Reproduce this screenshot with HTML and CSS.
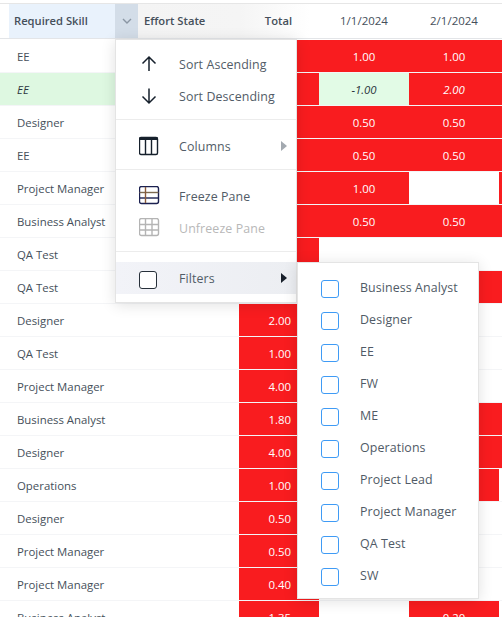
FILE: index.html
```html
<!DOCTYPE html>
<html lang="en">
<head>
<meta charset="utf-8">
<title>Resource grid</title>
<link rel="stylesheet" href="styles.css">
</head>
<body>
<div class="page">
  <div class="grid">
    <div class="row head">
      <div class="h-pad"></div>
      <div class="h-skill">Required Skill</div>
      <div class="h-btn"><svg width="10" height="6" viewBox="0 0 10 6"><path d="M1 1l4 4 4-4" fill="none" stroke="#8a96a3" stroke-width="1.4"/></svg></div>
      <div class="h-effort">Effort State</div>
      <div class="h-total">Total</div>
      <div class="h-date">1/1/2024</div>
      <div class="h-date">2/1/2024</div>
      <div class="h-date"></div>
    </div>
    <div class="row"><div class="skill">EE</div><div class="effort"></div><div class="total red"></div><div class="date red">1.00</div><div class="date red">1.00</div><div class="date red"></div></div>
    <div class="row green"><div class="skill">EE</div><div class="effort"></div><div class="total red"></div><div class="date pale">-1.00</div><div class="date red">2.00</div><div class="date red"></div></div>
    <div class="row"><div class="skill">Designer</div><div class="effort"></div><div class="total red"></div><div class="date red">0.50</div><div class="date red">0.50</div><div class="date red"></div></div>
    <div class="row"><div class="skill">EE</div><div class="effort"></div><div class="total red"></div><div class="date red">0.50</div><div class="date red">0.50</div><div class="date red"></div></div>
    <div class="row"><div class="skill">Project Manager</div><div class="effort"></div><div class="total red"></div><div class="date red">1.00</div><div class="date"></div><div class="date red"></div></div>
    <div class="row"><div class="skill">Business Analyst</div><div class="effort"></div><div class="total red"></div><div class="date red">0.50</div><div class="date red">0.50</div><div class="date red"></div></div>
    <div class="row"><div class="skill">QA Test</div><div class="effort"></div><div class="total red"></div><div class="date"></div><div class="date"></div><div class="date"></div></div>
    <div class="row"><div class="skill">QA Test</div><div class="effort"></div><div class="total red"></div><div class="date"></div><div class="date red"></div><div class="date red"></div></div>
    <div class="row"><div class="skill">Designer</div><div class="effort"></div><div class="total red">2.00</div><div class="date"></div><div class="date"></div><div class="date"></div></div>
    <div class="row"><div class="skill">QA Test</div><div class="effort"></div><div class="total red">1.00</div><div class="date"></div><div class="date"></div><div class="date"></div></div>
    <div class="row"><div class="skill">Project Manager</div><div class="effort"></div><div class="total red">4.00</div><div class="date"></div><div class="date"></div><div class="date"></div></div>
    <div class="row"><div class="skill">Business Analyst</div><div class="effort"></div><div class="total red">1.80</div><div class="date"></div><div class="date red"></div><div class="date red"></div></div>
    <div class="row"><div class="skill">Designer</div><div class="effort"></div><div class="total red">4.00</div><div class="date"></div><div class="date red"></div><div class="date red"></div></div>
    <div class="row"><div class="skill">Operations</div><div class="effort"></div><div class="total red">1.00</div><div class="date"></div><div class="date red"></div><div class="date"></div></div>
    <div class="row"><div class="skill">Designer</div><div class="effort"></div><div class="total red">0.50</div><div class="date"></div><div class="date"></div><div class="date"></div></div>
    <div class="row"><div class="skill">Project Manager</div><div class="effort"></div><div class="total red">0.50</div><div class="date"></div><div class="date"></div><div class="date"></div></div>
    <div class="row"><div class="skill">Project Manager</div><div class="effort"></div><div class="total red">0.40</div><div class="date"></div><div class="date"></div><div class="date"></div></div>
    <div class="row"><div class="skill">Business Analyst</div><div class="effort"></div><div class="total red">1.35</div><div class="date"></div><div class="date red">0.20</div><div class="date"></div></div>
  </div>

  <div class="menu">
    <div class="item"><span class="icon"><svg width="20" height="20" viewBox="0 0 20 20"><path d="M10 17V3M3.500 9.500L10 3l6.500 6.500" fill="none" stroke="#16202c" stroke-width="1.5"/></svg></span>Sort Ascending</div>
    <div class="item"><span class="icon"><svg width="20" height="20" viewBox="0 0 20 20"><path d="M10 2.500V17M3.500 10.500L10 17l6.500-6.500" fill="none" stroke="#16202c" stroke-width="1.5"/></svg></span>Sort Descending</div>
    <div class="sep"></div>
    <div class="item"><span class="icon"><svg width="20" height="20" viewBox="0 0 20 20"><rect x="0.500" y="1.500" width="18" height="17" rx="1.500" fill="none" stroke="#16202c" stroke-width="1.400"/><rect x="0.500" y="1" width="18" height="3" fill="#16202c"/><path d="M6.500 2v16M12.500 2v16" stroke="#16202c" stroke-width="1.400"/></svg></span>Columns<span class="arrow muted"></span></div>
    <div class="sep"></div>
    <div class="item"><span class="icon"><svg width="22" height="20" viewBox="0 0 22 20"><rect x="0.500" y="0.500" width="19" height="17" rx="2" fill="none" stroke="#1b2050" stroke-width="1.400"/><path d="M0.500 6.500h19" stroke="#7d6a50" stroke-width="1.400"/><path d="M0.500 12h19" stroke="#1b2050" stroke-width="1.400"/><path d="M6.500 1v16" stroke="#8a5b3c" stroke-width="1.400"/></svg></span>Freeze Pane</div>
    <div class="item disabled"><span class="icon"><svg width="22" height="20" viewBox="0 0 22 20"><rect x="0.500" y="0.500" width="19" height="17" rx="2" fill="none" stroke="#b4b4b4" stroke-width="1.400"/><path d="M0.500 6.500h19M0.500 12h19M6.500 1v16M13 1v16" stroke="#b4b4b4" stroke-width="1.400"/></svg></span>Unfreeze Pane</div>
    <div class="sep"></div>
    <div class="item active"><span class="icon"><span class="box dark"></span></span>Filters<span class="arrow"></span></div>
  </div>

  <div class="submenu">
    <div class="item sub"><span class="box blue"></span>Business Analyst</div>
    <div class="item sub"><span class="box blue"></span>Designer</div>
    <div class="item sub"><span class="box blue"></span>EE</div>
    <div class="item sub"><span class="box blue"></span>FW</div>
    <div class="item sub"><span class="box blue"></span>ME</div>
    <div class="item sub"><span class="box blue"></span>Operations</div>
    <div class="item sub"><span class="box blue"></span>Project Lead</div>
    <div class="item sub"><span class="box blue"></span>Project Manager</div>
    <div class="item sub"><span class="box blue"></span>QA Test</div>
    <div class="item sub"><span class="box blue"></span>SW</div>
  </div>
</div>
</body>
</html>
```
FILE: styles.css
```css
html, body { margin: 0; padding: 0; }
body { background: #fff; font-family: "Open Sans", "Noto Sans", sans-serif; color: #454f5a; }
.page { position: relative; width: 502px; height: 617px; overflow: hidden; }
.grid { padding-top: 3px; }
.row {
  display: grid;
  grid-template-columns: 115px 124px 80px 90px 90px 90px;
  grid-template-rows: 32px;
  height: 33px;
  box-sizing: border-box;
  border-bottom: 1px solid #eceef2;
  font-size: 11.4px;
  line-height: 34px;
  width: 589px;
}
.row.head {
  display: flex;
  height: 36px;
  margin-bottom: 1px;
  border-top: 1px solid #e6e6e6;
  border-bottom: 1px solid #e3e5e8;
  line-height: 34px;
  font-weight: 600;
  font-size: 11.200px;
  background: linear-gradient(to right, #f4f4f4 138px, #f5f5f5 240px, #fff 310px);
}
.h-pad { width: 9px; background: #fff; }
.h-skill { padding-left: 5px; background: #e9f2fc; box-sizing: border-box; width: 106px; }
.h-btn { width: 23px; background: #d3dde8; display: flex; align-items: center; justify-content: center; }
.h-effort { width: 101px; padding-left: 6px; box-sizing: border-box; }
.h-total { width: 80px; text-align: right; padding-right: 27px; box-sizing: border-box; }
.h-date { width: 90px; text-align: center; font-weight: 400; font-size: 11.500px; }
.skill { padding-left: 17px; }
.total { text-align: right; padding-right: 28px; }
.date { text-align: center; }
.red { background: #f91c1f; color: #fff; }
.row:has(.red) { border-bottom-color: #f4f5f7; }
.row.green .skill, .row.green .effort { background: #def8e1; }
.row.green { font-style: italic; color: #2c3640; }
.pale { background: #e2fbe6; }
.row.green .red { color: #fff; }
.menu, .submenu {
  position: absolute;
  background: #fff;
  border: 1px solid #e4e4e4;
  box-sizing: border-box;
  box-shadow: 0 2px 14px rgba(0, 0, 0, 0.12);
}
.menu { left: 115px; top: 39px; width: 182px; height: 264px; padding: 8px 0; }
.submenu { left: 297px; top: 262px; width: 182px; height: 337px; padding: 8px 0; }
.item {
  display: flex;
  align-items: center;
  height: 32px;
  font-size: 12.400px;
  color: #525c67;
  letter-spacing: 0.1px;
  position: relative;
}
.icon { width: 63px; padding-left: 23px; box-sizing: border-box; display: flex; align-items: center; flex: none; }
.sep { height: 1px; background: #ececec; margin: 7px 0 10px; }
.disabled { color: #b8b8b8; }
.active { background: linear-gradient(to right, #f2f3f8, #eceef2); }
.arrow {
  position: absolute;
  right: 9px;
  top: 11px;
  border-left: 6px solid #18202b;
  border-top: 5px solid transparent;
  border-bottom: 5px solid transparent;
}
.arrow.muted { border-left-color: #a3a9b0; }
.box { display: block; width: 18px; height: 18px; border-radius: 3px; box-sizing: border-box; background: #fff; flex: none; margin-top: 4px; }
.box.dark { border: 1.5px solid #27303a; }
.box.blue { border: 1.5px solid #3f9bf5; margin-left: 23px; margin-right: 21px; }
.sub { color: #505a66; }
```
